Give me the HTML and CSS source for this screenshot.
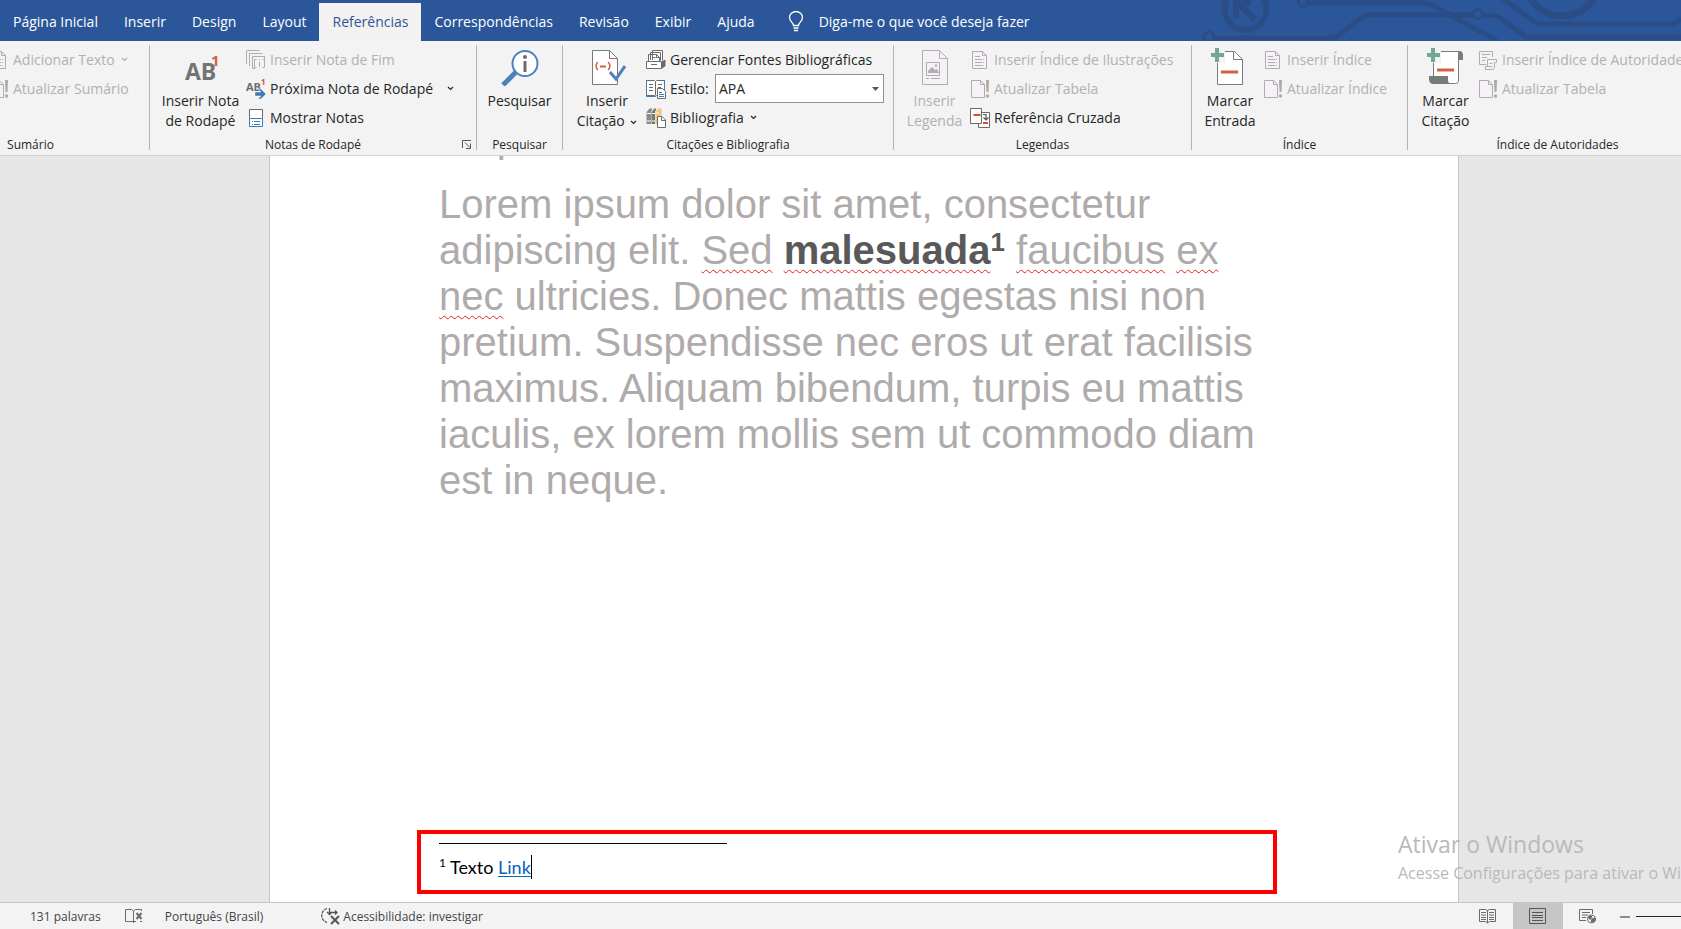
FILE: index.html
```
<!DOCTYPE html>
<html lang="pt-BR">
<head>
    <meta charset="UTF-8">
    <title>Documento - Word</title>
    <link rel="stylesheet" href="styles.css">
</head>
<body>
    <!-- Shared icons -->
    <svg class="symbols" aria-hidden="true">
        <symbol id="chevron" viewBox="0 0 7 5"><path d="M1 1l2.5 2.5L6 1" fill="none" stroke="currentColor" stroke-width="1.2"/></symbol>
        <symbol id="list-page" viewBox="0 0 20 20">
            <path d="M2.5 1.5h10l4 4v13h-14z" fill="#f6f1f7" stroke="#b1acb1"/>
            <path d="M12.5 1.5v4h4" fill="none" stroke="#b1acb1"/>
            <path d="M5 6.5h5M5 9.5h7M5 12.5h7M5 15.500h7M13 9.500h1M13 12.500h1M13 15.500h1" stroke="#b1acb1"/>
        </symbol>
        <symbol id="update-page" viewBox="0 0 20 20">
            <path d="M1.500 1.500h9l4 4v13h-13z" fill="#f6f1f7" stroke="#b1acb1"/>
            <path d="M10.500 1.500v4h4" fill="none" stroke="#b1acb1"/>
            <path d="M15 0h5v20h-5z" fill="#f3f2f1"/>
            <path d="M16 1h3l-.5 12h-2z" fill="#aaa"/><circle cx="17.500" cy="17" r="1.700" fill="#aaa"/>
        </symbol>
        <symbol id="plus" viewBox="0 0 14 14"><path d="M5 0h4v5h5v4H9v5H5V9H0V5h5z" fill="#72a794"/></symbol>
    </svg>

    <nav class="tabs">
        <svg class="circuit" viewBox="0 0 481 41" aria-hidden="true">
            <g fill="none" stroke="#2a4d86" stroke-width="5">
                <circle cx="45.500" cy="9" r="21" stroke-width="6"/>
                <path d="M36 18V3h15M37 3l18 16" stroke-width="6"/>
                <circle cx="9" cy="37" r="5" stroke-width="3"/>
                <path d="M14 38h121l30-23h109"/>
                <circle cx="278" cy="14" r="4.500" stroke-width="3"/>
                <path d="M283 15h6c8 0 12 3 18 8l19 14h155"/>
                <circle cx="103" cy="2" r="4.500" stroke-width="3"/>
                <path d="M108 3h115c7 0 11 3 17 6l57 32"/>
                <path d="M302-2l30 22c4 3 5 4 9 4h131c4 0 6-2 9-6"/>
                <circle cx="362.500" cy="-22" r="38" stroke-width="7"/>
            </g>
        </svg>
        <button class="tab">Página Inicial</button>
        <button class="tab">Inserir</button>
        <button class="tab">Design</button>
        <button class="tab">Layout</button>
        <button class="tab active">Referências</button>
        <button class="tab">Correspondências</button>
        <button class="tab">Revisão</button>
        <button class="tab">Exibir</button>
        <button class="tab">Ajuda</button>
        <button class="tell-me">
            <svg width="16" height="21" viewBox="0 0 16 21" fill="none" stroke="#fff" stroke-width="1.300">
                <path d="M5.500 14.500c0-3-4-4-4-8a6.500 6 0 0 1 13 0c0 4-4 5-4 8zM5.500 17h5M6 19.500h4"/>
            </svg>
            Diga-me o que você deseja fazer
        </button>
    </nav>

    <div class="ribbon">
        <section class="group g-toc">
            <div class="group-body">
                <div class="small-col">
                    <button class="small" disabled><svg class="ico"><use href="#list-page"/></svg>Adicionar Texto<svg class="chev"><use href="#chevron"/></svg></button>
                    <button class="small" disabled><svg class="ico"><use href="#update-page"/></svg>Atualizar Sumário</button>
                </div>
            </div>
            <div class="group-label">Sumário</div>
        </section>

        <section class="group g-notes">
            <div class="group-body">
                <button class="big">
                    <svg class="big-ico" viewBox="0 0 38 36">
                        <text x="3" y="30" class="ab">AB</text>
                        <text x="29" y="16" class="one">1</text>
                    </svg>
                    Inserir Nota<br>de Rodapé
                </button>
                <div class="small-col">
                    <button class="small" disabled>
                        <svg class="ico" viewBox="0 0 20 20" fill="none" stroke="#b1acb1">
                            <path d="M.5 14V.5h13M3.500 16V3.500h13M9 18.500H6.500v-12h12V10"/>
                            <path d="M10.500 9.500h-2v8h2M16.500 9.500h2v8h-2M13.500 12v5M13.500 9.500v1"/>
                        </svg>Inserir Nota de Fim
                    </button>
                    <button class="small">
                        <svg class="ico" viewBox="0 0 20 20">
                            <text x="0" y="12" class="ab-small">AB</text>
                            <text x="15" y="6" class="one-small">1</text>
                            <path d="M9 13h6l-3-3h3l5 5-5 5h-3l3-3H9z" fill="#3f7ab8" stroke="#f3f2f1" stroke-width=".5"/>
                        </svg>Próxima Nota de Rodapé<svg class="chev far"><use href="#chevron"/></svg>
                    </button>
                    <button class="small">
                        <svg class="ico" viewBox="0 0 20 20">
                            <path d="M3.500 10V1.500h13V10" fill="#fff" stroke="#6b6b6b"/>
                            <path d="M3.500 10.500h13v8h-13z" fill="#fff" stroke="#3f7ab8"/>
                            <path d="M6 13.500h1M8 13.500h6M6 16.500h1M8 16.500h6" stroke="#3f7ab8"/>
                        </svg>Mostrar Notas
                    </button>
                </div>
            </div>
            <div class="group-label">Notas de Rodapé</div>
            <button class="launcher" aria-label="Notas de Rodapé">
                <svg width="10" height="9" viewBox="0 0 10 9" fill="none" stroke="#555"><path d="M.5 8V.5H9M3 2.500l5 5M8.500 3.500v5H4"/></svg>
            </button>
        </section>

        <section class="group g-search">
            <div class="group-body">
                <button class="big">
                    <svg class="big-ico" viewBox="0 0 38 36">
                        <path d="M2 35l13-13" stroke="#4a82bd" stroke-width="5"/>
                        <circle cx="24" cy="13.500" r="12.500" fill="#fff" stroke="#4a82bd" stroke-width="2"/>
                        <path d="M24 11v11" stroke="#6b6b6b" stroke-width="3"/><circle cx="24" cy="7" r="2" fill="#6b6b6b"/>
                    </svg>
                    Pesquisar
                </button>
            </div>
            <div class="group-label">Pesquisar</div>
        </section>

        <section class="group g-cite">
            <div class="group-body">
                <button class="big">
                    <svg class="big-ico" viewBox="0 0 38 36">
                        <path d="M4.500.5h17l8 8v26h-25z" fill="#fff" stroke="#7a7a7a"/>
                        <path d="M21.500.5v8h8" fill="none" stroke="#7a7a7a"/>
                        <path d="M10 12c-2.500 2-2.500 6 0 8M20 12c2.500 2 2.500 6 0 8" fill="none" stroke="#d6603c" stroke-width="1.500"/>
                        <path d="M12 16.500h6" stroke="#d6603c" stroke-width="2"/>
                        <path d="M22 22l6 7 9-13" fill="none" stroke="#4a82bd" stroke-width="3"/>
                    </svg>
                    Inserir<br>Citação <svg class="chev"><use href="#chevron"/></svg>
                </button>
                <div class="small-col">
                    <button class="small">
                        <svg class="ico" viewBox="0 0 20 20" fill="#fff" stroke="#6b6b6b">
                            <path d="M6.500 10V.5h10v10M4.500 10V2.500h10v8M2.500 11V4.500h8l3 3V11M10.500 4.500v3h3M6.500 10V7.500h3"/>
                            <path d="M16 12l3-2v6l-3 2z" fill="#6b6b6b"/>
                            <path d="M.5 11.500h15v7H.5z"/><path d="M5 14.500h6"/>
                        </svg>Gerenciar Fontes Bibliográficas
                    </button>
                    <div class="style-row">
                        <svg class="ico" viewBox="0 0 20 20">
                            <path d="M.5 1.500h8l1 1 1-1h8v15h-8l-1 1-1-1h-8z" fill="#fff" stroke="#6b6b6b"/>
                            <path d="M.5 1v16.500H9M18.500 1v10" fill="none" stroke="#3f7ab8"/>
                            <path d="M9.500 2.500v14M3 5.500h4M3 8.500h4M3 11.500h4M12 5.500h4M12 8.500h3" stroke="#6b6b6b"/>
                            <path d="M11.500 9.500h5l3 3v7h-8z" fill="#fff" stroke="#6b6b6b"/>
                            <path d="M13 13.500h3M13 15.500h5M13 17.500h5" stroke="#3f7ab8"/>
                        </svg>
                        <label for="style">Estilo:</label>
                        <span class="combo">
                            <select id="style"><option>APA</option><option>Chicago</option><option>MLA</option></select>
                            <svg width="7" height="4" viewBox="0 0 7 4"><path d="M0 0h7L3.500 4z" fill="#555"/></svg>
                        </span>
                    </div>
                    <button class="small">
                        <svg class="ico" viewBox="0 0 20 20">
                            <path d="M.5 4l3-3.500h3L5 4v12H.5z" fill="#8a8a8a"/><path d="M1 5.500h4M1 13h4" stroke="#fff"/>
                            <path d="M5.500 4l3-3.500h2L9 4v12H5.500z" fill="#777"/><path d="M6 5.500h3M6 13h3" stroke="#fff"/>
                            <path d="M9.500 4l3-3.500h3v10l-3 5.500h-3z" fill="#efc67c"/><path d="M10 5h3" stroke="#fff"/>
                            <path d="M11.500 8.500h4.500l3.500 3.500v7.500h-8z" fill="#fff" stroke="#6b6b6b"/><path d="M15.500 8.500v4h4" fill="none" stroke="#6b6b6b"/>
                        </svg>Bibliografia<svg class="chev"><use href="#chevron"/></svg>
                    </button>
                </div>
            </div>
            <div class="group-label">Citações e Bibliografia</div>
        </section>

        <section class="group g-captions">
            <div class="group-body">
                <button class="big" disabled>
                    <svg class="big-ico" viewBox="0 0 38 36">
                        <path d="M6.500.5h17l8 8v26h-25z" fill="#f6f1f7" stroke="#b1acb1"/>
                        <path d="M23.500.5v8h8" fill="none" stroke="#b1acb1"/>
                        <path d="M10.500 12.500h13v13h-13z" fill="none" stroke="#b1acb1"/>
                        <path d="M12 23v-2l4-4 3 3 2-1 2 4z" fill="#b1acb1"/><circle cx="20" cy="15.500" r="1.200" fill="#b1acb1"/>
                        <path d="M10 28.500h3M15 28.500h9" stroke="#b1acb1"/>
                    </svg>
                    Inserir<br>Legenda
                </button>
                <div class="small-col">
                    <button class="small" disabled><svg class="ico"><use href="#list-page"/></svg>Inserir Índice de Ilustrações</button>
                    <button class="small" disabled><svg class="ico"><use href="#update-page"/></svg>Atualizar Tabela</button>
                    <button class="small">
                        <svg class="ico" viewBox="0 0 20 20">
                            <path d="M8.500 4.500h11v15h-11z" fill="#fff" stroke="#6b6b6b"/>
                            <path d="M.5.5h11v15H.5z" fill="#fff" stroke="#6b6b6b"/>
                            <path d="M3.500 7h7M13 15h5" stroke="#d6502c" stroke-width="2"/>
                            <path d="M13 6.500h3V12M13.500 9.500L16 12l2.500-2.500" fill="none" stroke="#555" stroke-width="1.200"/>
                        </svg>Referência Cruzada
                    </button>
                </div>
            </div>
            <div class="group-label">Legendas</div>
        </section>

        <section class="group g-index">
            <div class="group-body">
                <button class="big">
                    <svg class="big-ico overhang" viewBox="0 -2 38 38">
                        <path d="M6.500 1.500h17l8 8v25h-25z" fill="#fff" stroke="#7a7a7a"/>
                        <path d="M22.500 1.500v8h9" fill="none" stroke="#7a7a7a"/>
                        <path d="M0 0h14v13H0z" fill="#f3f2f1"/>
                        <use href="#plus" x="-1" y="-2" width="14" height="14"/>
                        <path d="M10 22h17" stroke="#d6603c" stroke-width="3"/>
                    </svg>
                    Marcar<br>Entrada
                </button>
                <div class="small-col">
                    <button class="small" disabled><svg class="ico"><use href="#list-page"/></svg>Inserir Índice</button>
                    <button class="small" disabled><svg class="ico"><use href="#update-page"/></svg>Atualizar Índice</button>
                </div>
            </div>
            <div class="group-label">Índice</div>
        </section>

        <section class="group g-authorities">
            <div class="group-body">
                <button class="big">
                    <svg class="big-ico overhang" viewBox="0 -2 38 38">
                        <path d="M6.500 1.500h26l-1 1.500v27c0 2-1 3.500-3 3.500h-22z" fill="#fff" stroke="#7a7a7a"/>
                        <path d="M32 1c3 0 4 2 4 4.500V10h-5V4z" fill="#7a7a7a"/>
                        <path d="M2 26h19v4c0 2 1 4 3 4H6c-3 0-4-3-4-5z" fill="#7a7a7a"/>
                        <path d="M0 0h14v13H0z" fill="#f3f2f1"/>
                        <use href="#plus" x="-1" y="-2" width="14" height="14"/>
                        <path d="M10 20h17" stroke="#d6603c" stroke-width="3"/>
                    </svg>
                    Marcar<br>Citação
                </button>
                <div class="small-col">
                    <button class="small" disabled>
                        <svg class="ico" viewBox="0 0 20 20" fill="none" stroke="#b1acb1">
                            <path d="M8 14.500H1.500v-13h13V7M4 4.500h8M4 7.500h5M4 10.500h3"/>
                            <path d="M9.500 16V9.500h9v3h-2v5c0 1-1 2-2 2h-7v-3h7M11.500 13.500h3"/>
                        </svg>Inserir Índice de Autoridades
                    </button>
                    <button class="small" disabled><svg class="ico"><use href="#update-page"/></svg>Atualizar Tabela</button>
                </div>
            </div>
            <div class="group-label">Índice de Autoridades</div>
        </section>
    </div>

    <main class="workspace">
        <article class="page">
            <p class="previous">neque.</p>
            <p>Lorem ipsum dolor sit amet, consectetur adipiscing elit. <span class="typo">Sed</span> <b><span class="typo">malesuada</span><sup>1</sup></b> <span class="typo">faucibus</span> <span class="typo">ex</span> <span class="typo">nec</span> ultricies. Donec mattis egestas nisi non pretium. Suspendisse nec eros ut erat facilisis maximus. Aliquam bibendum, turpis eu mattis iaculis, ex lorem mollis sem ut commodo diam est in neque.</p>
            <div class="footnote">
                <hr>
                <div class="footnote-text"><sup>1</sup> Texto <a href="#">Link</a><span class="caret"></span></div>
            </div>
        </article>
        <div class="watermark">
            <div class="watermark-title">Ativar o Windows</div>
            <div class="watermark-text">Acesse Configurações para ativar o Windows.</div>
        </div>
    </main>

    <footer class="status">
        <span class="page-count">Página 1 de 1</span>
        <span class="words">131 palavras</span>
        <button class="proof" aria-label="Revisão de texto">
            <svg width="18" height="16" viewBox="0 0 18 16" fill="none" stroke="#6b6b6b">
                <path d="M9 13.500H.5v-12h6l2 1.500 2-1.500h6V3M8.500 3v12M9 13.500h2M15 13.500h2"/>
                <path d="M11.500 5l5 6M16.500 5l-5 6" stroke-width="2"/>
            </svg>
        </button>
        <button class="language">Português (Brasil)</button>
        <button class="access">
            <svg width="19" height="18" viewBox="0 0 19 18" fill="none" stroke="#555">
                <path d="M6 1.500C-1 4-1 13 6 15.500" stroke-width="1.300" stroke-dasharray="3 1"/>
                <path d="M8.500 1v6M6 5l2.500 2.500L11 5M9 5.500h7M14 3.500l2 2-2 2" stroke-width="1.300"/>
                <path d="M10 9l8 8M18 9l-8 8" stroke-width="2"/>
            </svg>
            Acessibilidade: investigar
        </button>
        <div class="views">
            <button class="view" aria-label="Modo de Leitura">
                <svg width="18" height="16" viewBox="0 0 18 16" fill="none" stroke="#6b6b6b">
                    <path d="M.5 1.500h6l2 1 2-1h6v12h-6l-2 1.500-2-1.500h-6zM8.500 2v13M2 4.500h5M2 7h5M2 9.500h5M2 11.500h5M10 4.500h5M10 7h5M10 9.500h5M10 11.500h5"/>
                </svg>
            </button>
            <button class="view selected" aria-label="Layout de Impressão">
                <svg width="18" height="16" viewBox="0 0 18 16" fill="none" stroke="#555">
                    <path d="M.5.5h16v15H.5zM3 4.500h11M3 7.500h11M3 9.500h11M3 12.500h11"/>
                </svg>
            </button>
            <button class="view" aria-label="Layout da Web">
                <svg width="18" height="16" viewBox="0 0 18 16" fill="none" stroke="#6b6b6b">
                    <path d="M7 12.500H.5v-11h13V6M3 4.500h8M3 7h6M3 9.500h4"/>
                    <circle cx="12.500" cy="11" r="4" fill="#fff"/><path d="M9 9l3-1.500 1 2-2 2zM12 14l1-3 3-1v3z" fill="#6b6b6b"/>
                </svg>
            </button>
            <button class="zoom-out" aria-label="Reduzir">
                <svg width="10" height="2" viewBox="0 0 10 2"><path d="M0 1h10" stroke="#262626"/></svg>
            </button>
            <div class="zoom"><input type="range" min="0" max="100" value="80" aria-label="Zoom"></div>
        </div>
    </footer>
</body>
</html>
```
FILE: styles.css
```
* {
    box-sizing: border-box;
}

body {
    margin: 0;
    height: 100vh;
    display: flex;
    flex-direction: column;
    overflow: hidden;
    font-family: "Open Sans", "Noto Sans", sans-serif;
    font-size: 14px;
    color: #262626;
    background-color: #e6e6e6;
}

button {
    font: inherit;
    color: inherit;
    background: none;
    border: none;
    padding: 0;
    white-space: nowrap;
}

button:disabled {
    color: #b1b1b1;
}

.symbols {
    position: absolute;
    width: 0;
    height: 0;
}

/* Tabs */
.tabs {
    position: relative;
    display: flex;
    flex: none;
    height: 41px;
    padding-top: 3px;
    background-color: #2b579a;
    color: #fff;
}

.circuit {
    position: absolute;
    top: 0;
    right: 0;
    width: 481px;
    height: 41px;
}

.tab {
    padding: 0 13px 2px;
}

.tab.active {
    background-color: #f3f2f1;
    color: #2b579a;
}

.tell-me {
    display: flex;
    align-items: center;
    gap: 15px;
    margin-left: 20px;
    padding-bottom: 2px;
}

/* Ribbon */
.ribbon {
    display: flex;
    flex: none;
    height: 115px;
    margin-left: -88px;
    padding: 4px 0 5px;
    background-color: #f3f3f3;
    border-bottom: 1px solid #d2d2d2;
}

.group {
    position: relative;
    flex: none;
    height: 105px;
    border-right: 1px solid #b3b3b3;
}

.g-toc { width: 238px; }
.g-notes { width: 327px; }
.g-search { width: 86px; }
.g-cite { width: 331px; }
.g-captions { width: 298px; }
.g-index { width: 216px; }
.g-authorities { width: 300px; }

.group-body {
    display: flex;
    height: 87px;
    padding-left: 5px;
}

.g-toc .group-body {
    padding-left: 77px;
}

.g-notes .big { width: 91px; }
.g-search .big { width: 75px; }
.g-cite .big { width: 78px; }
.g-captions .big { width: 71px; }
.g-index .big { width: 66px; }
.g-authorities .big { width: 65px; }

.group-label {
    line-height: 26px;
    font-size: 12px;
    text-align: center;
}

.big {
    align-self: flex-start;
    padding-top: 5px;
    line-height: 20px;
    text-align: center;
}

.big-ico {
    display: block;
    width: 38px;
    height: 36px;
    margin: 0 auto 5px;
}

.big-ico.overhang {
    height: 38px;
    margin-top: -2px;
}

.small {
    display: flex;
    align-items: center;
    height: 29px;
}

.ico {
    width: 20px;
    height: 20px;
    margin-right: 4px;
}

.chev {
    width: 7px;
    height: 5px;
    margin-left: 6px;
    vertical-align: middle;
}

.big .chev {
    margin-left: 2px;
}

.chev.far {
    margin-left: 14px;
}

.ab {
    font: bold 23px "Open Sans", sans-serif;
    fill: #737373;
}

.one {
    font: bold 15px "Open Sans", sans-serif;
    fill: #d6603c;
}

.ab-small {
    font: bold 11px "Open Sans", sans-serif;
    fill: #6b6b6b;
}

.one-small {
    font: bold 8px "Open Sans", sans-serif;
    fill: #d6502c;
}

.launcher {
    position: absolute;
    right: 4px;
    bottom: 1px;
    line-height: 0;
}

.style-row {
    display: flex;
    align-items: center;
    height: 29px;
}

.style-row label {
    width: 45px;
}

.combo {
    position: relative;
}

.combo select {
    appearance: none;
    display: block;
    width: 169px;
    height: 29px;
    padding: 0 3px;
    font: inherit;
    color: #262626;
    background-color: #fff;
    border: 1px solid #8f8f8f;
    border-radius: 0;
}

.combo svg {
    position: absolute;
    right: 5px;
    top: 13px;
}

/* Document */
.workspace {
    position: relative;
    flex: 1;
    display: flex;
    overflow: hidden;
}

.page {
    display: flex;
    flex-direction: column;
    width: 1190px;
    margin-left: 269px;
    padding: 0 181px 8px 169px;
    background-color: #fff;
    border: 1px solid #c6c6c6;
    border-width: 0 1px;
    font-family: "Liberation Sans", Arial, sans-serif;
    font-size: 40px;
    line-height: 46px;
    color: #afabab;
}

.page p {
    margin: 0 0 20px;
}

/* only the bottom of this line is scrolled into view */
.page .previous {
    margin-top: -41px;
}

.page b {
    color: #595959;
}

.page b sup {
    font-size: 26px;
    line-height: 0;
    vertical-align: 13px;
}

.typo {
    text-decoration: underline wavy #e8201c 1px;
    text-underline-offset: 5px;
    text-decoration-skip-ink: none;
}

.footnote {
    height: 64px;
    margin-top: auto;
    margin-left: -22px;
    padding: 9px 18px;
    border: 4px solid #f00;
    font-family: Lato, Carlito, sans-serif;
    font-size: 18px;
    line-height: 24px;
    color: #000;
}

.footnote hr {
    width: 288px;
    height: 1px;
    margin: 0 0 11px;
    border: none;
    background-color: #000;
}

.footnote-text {
    display: flex;
    white-space: pre;
}

.footnote sup {
    font-size: 12px;
    line-height: 16px;
}

.footnote a {
    color: #0563c1;
    text-underline-offset: 2px;
}

.caret {
    width: 1px;
    height: 24px;
    background-color: #000;
}

.watermark {
    position: absolute;
    left: 1398px;
    bottom: 16px;
    color: #b9b9b9;
    white-space: nowrap;
}

.watermark-title {
    font-size: 23px;
    line-height: 32px;
}

.watermark-text {
    font-size: 16px;
    line-height: 26px;
}

/* Status bar */
.status {
    display: flex;
    align-items: center;
    flex: none;
    height: 27px;
    background-color: #f3f3f3;
    border-top: 1px solid #c6c6c6;
    font-size: 12px;
    color: #444;
}

.page-count {
    width: 2px;
    display: flex;
    justify-content: flex-end;
    white-space: nowrap;
}

.words {
    margin-left: 28px;
}

.proof {
    margin-left: 24px;
    line-height: 0;
}

.language {
    margin-left: 22px;
}

.access {
    display: flex;
    align-items: center;
    gap: 3px;
    margin-left: 58px;
}

.views {
    display: flex;
    align-items: center;
    height: 100%;
    margin-left: auto;
}

.view {
    width: 50px;
    height: 100%;
    line-height: 0;
}

.view.selected {
    background-color: #c6c6c6;
}

.zoom-out {
    width: 10px;
    margin-left: 7px;
    line-height: 0;
}

.zoom {
    display: flex;
    width: 45px;
    margin-left: 6px;
    overflow: hidden;
}

.zoom input {
    appearance: none;
    flex: none;
    width: 160px;
    height: 1px;
    margin: 0;
    background-color: #262626;
}
```
